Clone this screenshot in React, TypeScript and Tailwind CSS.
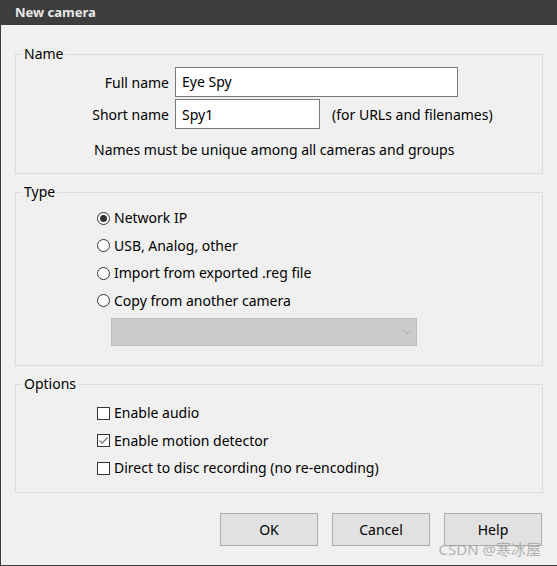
import React from "react";

const font = { fontFamily: '"Noto Sans", "Noto Sans CJK SC", sans-serif' };

function Radio({ checked, label }: { checked?: boolean; label: string }) {
  return (
    <div className="h-[27.5px] flex items-center">
      <span className="w-[13px] h-[13px] rounded-full border border-[#333333] bg-white flex items-center justify-center">
        {checked && <span className="w-[7px] h-[7px] rounded-full bg-[#333333]" />}
      </span>
      <span className="ml-[4px] text-[14px] leading-[20px] text-black">{label}</span>
    </div>
  );
}

function Check({ checked, label }: { checked?: boolean; label: string }) {
  return (
    <div className="h-[27.5px] flex items-center">
      <span className="w-[13px] h-[13px] border border-[#333333] bg-white flex items-center justify-center">
        {checked && (
          <svg width="11" height="11" viewBox="0 0 11 11">
            <path d="M1.5 5.5 L4.2 8.2 L9.5 2.5" fill="none" stroke="#707070" strokeWidth="1.2" />
          </svg>
        )}
      </span>
      <span className="ml-[4px] text-[14px] leading-[20px] text-black">{label}</span>
    </div>
  );
}

function Legend({ children }: { children: React.ReactNode }) {
  return (
    <legend className="ml-[6px] px-[2px] text-[14px] leading-[20px] text-black">{children}</legend>
  );
}

export default function App() {
  return (
    <div style={font} className="w-[557px] h-[566px] bg-[#3d3d3d] flex flex-col relative overflow-hidden">
      <div className="h-[25px] flex items-center pl-[15px] text-[13px] font-bold text-[#e8e8e8]">
        New camera
      </div>
      <div className="flex-1 ml-[1px] mb-[1px] bg-[#f0f0f0] pl-[14px] pr-[14px] pt-[19px] flex flex-col">
        <fieldset className="border border-[#dcdcdc] pb-[13px]">
          <Legend>Name</Legend>
          <div className="mt-[3px] flex items-center">
            <span className="w-[153px] text-right text-[14px] text-black">Full name</span>
            <div className="ml-[6px] w-[283px] h-[30px] border border-[#7a7a7a] bg-white flex items-center pl-[6px] pb-[2px] text-[14px] text-black">
              Eye Spy
            </div>
          </div>
          <div className="mt-[2px] flex items-center">
            <span className="w-[153px] text-right text-[14px] text-black">Short name</span>
            <div className="ml-[6px] w-[145px] h-[30px] border border-[#7a7a7a] bg-white flex items-center pl-[6px] text-[14px] text-black">
              Spy1
            </div>
            <span className="ml-[12px] text-[14px] text-black">(for URLs and filenames)</span>
          </div>
          <div className="mt-[11px] pl-[78px] text-[14px] leading-[20px] text-black">
            Names must be unique among all cameras and groups
          </div>
        </fieldset>

        <fieldset className="mt-[8px] border border-[#dcdcdc] pb-[19px]">
          <Legend>Type</Legend>
          <div className="pt-[2.5px] pl-[81px]">
            <Radio checked label="Network IP" />
            <Radio label="USB, Analog, other" />
            <Radio label="Import from exported .reg file" />
            <Radio label="Copy from another camera" />
          </div>
          <div className="mt-[3.5px] ml-[95px] w-[306px] h-[28px] bg-[#cccccc] border border-[#bcbcbc] flex items-center justify-end pr-[4px]">
            <svg width="10" height="6" viewBox="0 0 10 6">
              <path d="M1 1 L5 5 L9 1" fill="none" stroke="#a8a8a8" strokeWidth="1" />
            </svg>
          </div>
        </fieldset>

        <fieldset className="mt-[8px] border border-[#dcdcdc] pb-[10px]">
          <Legend>Options</Legend>
          <div className="pt-[5.5px] pl-[81px]">
            <Check label="Enable audio" />
            <Check checked label="Enable motion detector" />
            <Check label="Direct to disc recording (no re-encoding)" />
          </div>
        </fieldset>

        <div className="mt-[20px] mr-[1px] flex justify-end gap-[14px]">
          {["OK", "Cancel", "Help"].map((b) => (
            <div
              key={b}
              className="w-[98px] h-[33px] bg-[#e1e1e1] border border-[#adadad] flex items-center justify-center text-[14px] text-black"
            >
              {b}
            </div>
          ))}
        </div>
      </div>
      <div className="absolute right-[16px] top-[539px] text-[15px] leading-[20px] text-[#a0a0a0]/80">
        CSDN @寒冰屋
      </div>
    </div>
  );
}
